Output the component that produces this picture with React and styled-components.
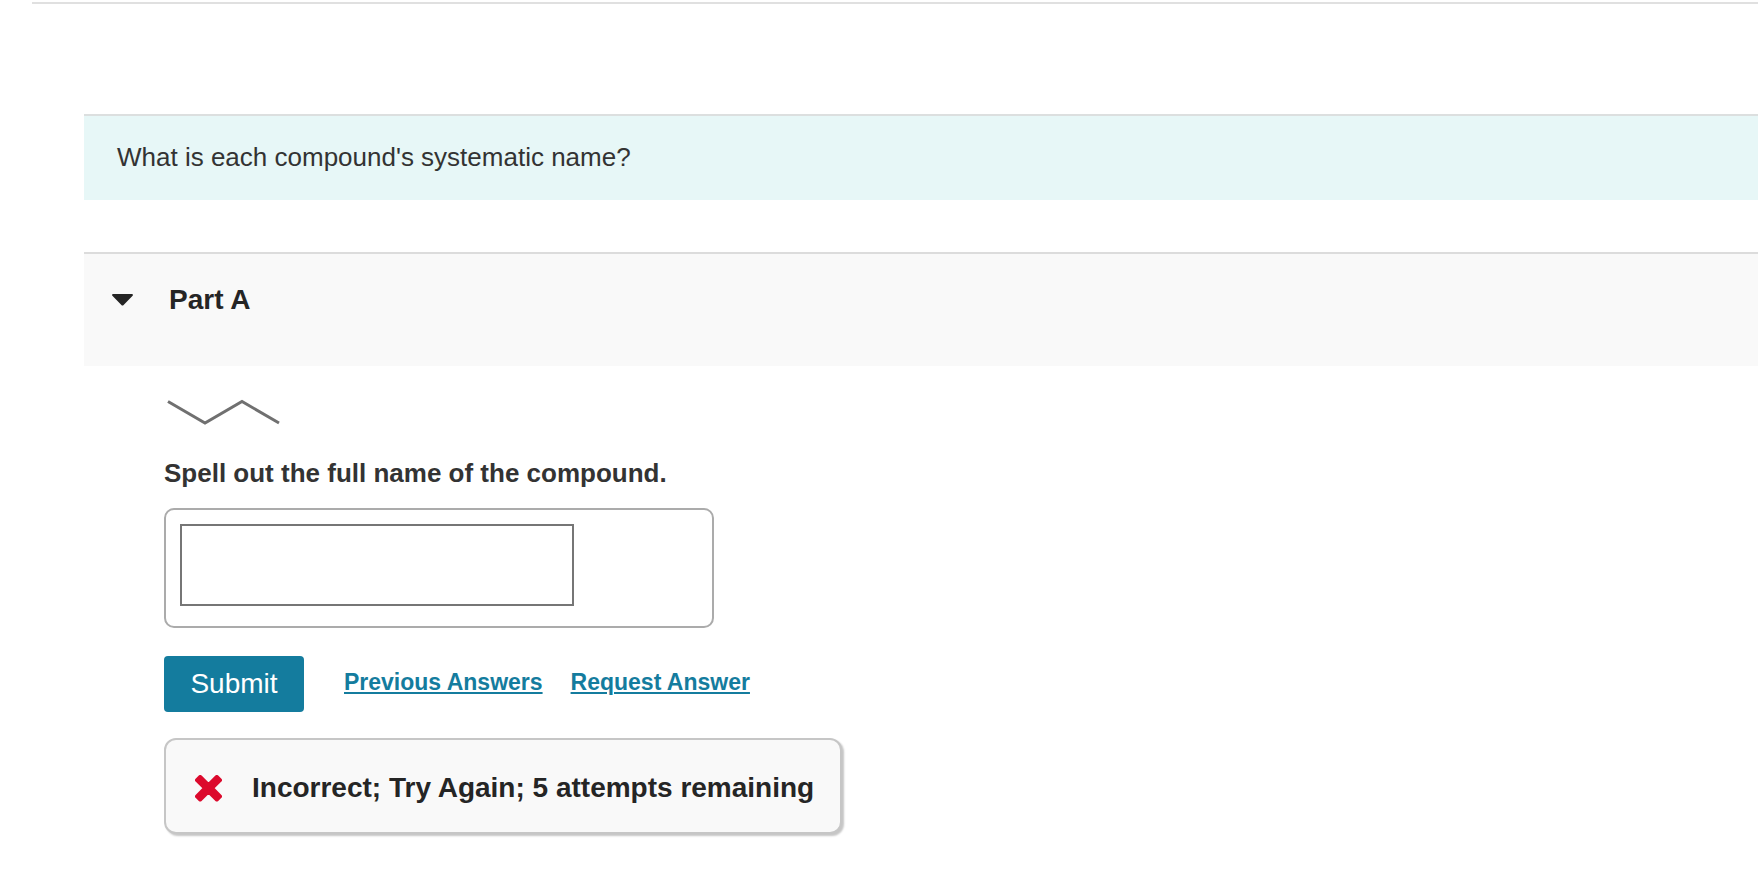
import { useState } from "react";
import styled, { createGlobalStyle } from "styled-components";

const GlobalStyle = createGlobalStyle`
  * {
    box-sizing: border-box;
  }

  body {
    margin: 0;
    background: #fff;
    color: #333;
    font-family: "Liberation Sans", Arial, sans-serif;
    font-size: 26px;
    line-height: 32px;
  }
`;

const Page = styled.main`
  margin: 2px 0 0 32px;
  padding: 110px 0 48px 52px;
  border-top: 2px solid #e0e0e0;
`;

const Question = styled.section`
  padding: 25px 33px 27px;
  border-top: 2px solid #dcdfdf;
  background: #e7f7f7;
`;

const QuestionText = styled.p`
  margin: 0;
`;

const PartHeader = styled.header`
  margin-top: 52px;
  padding: 30px 28px 50px;
  border-top: 2px solid #dcdcdc;
  background: #f9f9f9;
`;

const PartTitle = styled.h2`
  margin: 0;
  font-size: 28px;
  line-height: 32px;
`;

const PartToggle = styled.button`
  display: flex;
  align-items: center;
  gap: 36px;
  padding: 0;
  border: 0;
  background: none;
  color: #252525;
  font: inherit;
  cursor: pointer;
`;

const Caret = styled.svg`
  width: 21px;
  height: 12px;
  fill: #252525;
  transform: ${({ $open }) => ($open ? "none" : "rotate(-90deg)")};
`;

const PartBody = styled.form`
  padding: 32px 80px 0;
`;

const Molecule = styled.svg`
  display: block;
  width: 116px;
  height: 28px;
  fill: none;
  stroke: #707070;
  stroke-width: 3;
`;

const AnswerLabel = styled.label`
  display: block;
  margin: 31px 0 19px;
  font-weight: bold;
`;

const AnswerBox = styled.div`
  max-width: 550px;
  padding: 14px 14px 20px;
  border: 2px solid #ababab;
  border-radius: 10px;
`;

const AnswerInput = styled.input`
  display: block;
  width: 394px;
  max-width: 100%;
  height: 82px;
  padding: 0 12px;
  border: 2px solid #767676;
  border-radius: 0;
  background: #fff;
  color: #333;
  font: inherit;
`;

const Actions = styled.div`
  display: flex;
  align-items: center;
  margin: 28px 0 26px;
`;

const SubmitButton = styled.button`
  width: 140px;
  height: 56px;
  margin-right: 40px;
  padding: 0;
  border: 0;
  border-radius: 4px;
  background: #147c9e;
  color: #fff;
  font: inherit;
  font-size: 28px;
  cursor: pointer;
`;

const Links = styled.nav`
  display: flex;
  gap: 28px;
  padding-bottom: 4px;
`;

const ActionLink = styled.a`
  color: #147c9e;
  font-size: 23px;
  font-weight: bold;
  text-decoration-thickness: 2px;
  text-underline-offset: 2px;
`;

const Feedback = styled.div`
  display: flex;
  align-items: center;
  gap: 30px;
  width: fit-content;
  padding: 32px 26px 28px 29px;
  border: 2px solid #c6c6c6;
  border-radius: 12px;
  background: #f9f9f9;
  box-shadow: 2px 2px 2px #c6c6c6;
  color: #252525;
  font-size: 28px;
  font-weight: bold;
`;

const WrongIcon = styled.svg`
  flex-shrink: 0;
  width: 27px;
  height: 27px;
  fill: #dc0a2d;
  stroke: #dc0a2d;
  stroke-width: 4;
  stroke-linejoin: round;
`;

const links = [
  { id: "previous", text: "Previous Answers" },
  { id: "request", text: "Request Answer" },
];

const App = () => {
  const [open, setOpen] = useState(true);
  const [answer, setAnswer] = useState("");

  return (
    <>
      <GlobalStyle />
      <Page>
        <Question>
          <QuestionText>What is each compound's systematic name?</QuestionText>
        </Question>

        <PartHeader>
          <PartTitle>
            <PartToggle
              type="button"
              aria-expanded={open}
              onClick={() => setOpen(!open)}
            >
              <Caret $open={open} viewBox="0 0 21 12" aria-hidden="true">
                <path d="M1.2 0h18.6c1 0 1.5 1.1.8 1.8l-9 9.2c-.7.8-1.5.8-2.2 0l-9-9.2C-.3 1.1.2 0 1.2 0z" />
              </Caret>
              Part A
            </PartToggle>
          </PartTitle>
        </PartHeader>

        {open && (
          <PartBody onSubmit={(e) => e.preventDefault()}>
            {/* butane skeleton */}
            <Molecule viewBox="0 0 116 28" aria-hidden="true">
              <path d="M4 3.5L41 25L78 3.5L115 25" />
            </Molecule>
            <AnswerLabel htmlFor="answer">
              Spell out the full name of the compound.
            </AnswerLabel>
            <AnswerBox>
              <AnswerInput
                id="answer"
                type="text"
                autoComplete="off"
                value={answer}
                onChange={(e) => setAnswer(e.target.value)}
              />
            </AnswerBox>
            <Actions>
              <SubmitButton type="submit">Submit</SubmitButton>
              <Links>
                {links.map((link) => (
                  <ActionLink key={link.id} href={`#${link.id}`}>
                    {link.text}
                  </ActionLink>
                ))}
              </Links>
            </Actions>
            <Feedback role="status">
              <WrongIcon viewBox="0 0 27 27" aria-hidden="true">
                <path d="M2 5.2L5.2 2L13.5 10.1L21.8 2L25 5.2L16.9 13.2L25 21.3L21.8 24.5L13.5 16.4L5.2 24.5L2 21.3L10.1 13.2z" />
              </WrongIcon>
              Incorrect; Try Again; 5 attempts remaining
            </Feedback>
          </PartBody>
        )}
      </Page>
    </>
  );
};

export default App;
